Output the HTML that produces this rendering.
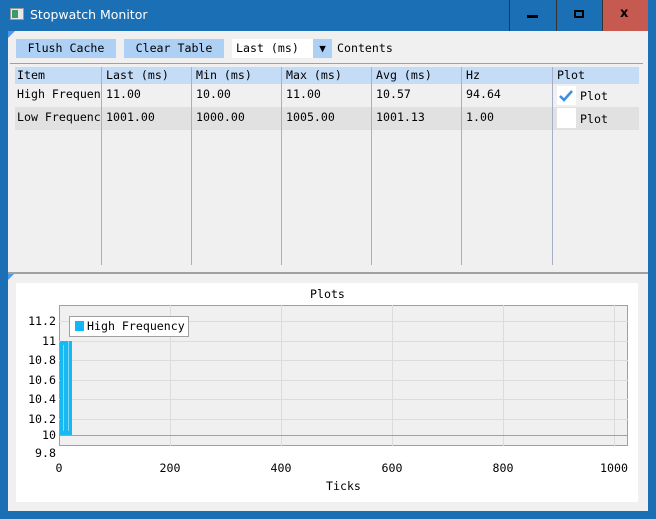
<!DOCTYPE html>
<html><head><style>
*{margin:0;padding:0;box-sizing:border-box}
body{width:656px;height:519px;background:#1a6fb5;position:relative;overflow:hidden;font-family:"DejaVu Sans Mono","Liberation Mono",monospace;font-size:11.6px;color:#000}
.a{position:absolute}
.title{left:30px;top:7px;font-family:"DejaVu Sans","Liberation Sans",sans-serif;font-size:12.5px;color:#fff}
.btn{background:#aed0f5;height:19px;line-height:19px;text-align:center}
.cell{position:absolute;white-space:nowrap;overflow:hidden}
.vl{position:absolute;width:1px;background:#a8aec8;top:67px;height:198px}
.gl{position:absolute;background:#dcdcdc}
.yl{position:absolute;right:600px;font-size:11.6px}
.xl{position:absolute;top:461px;font-size:11.6px;transform:translateX(-50%)}
</style></head><body>
<div class="a" style="left:10px;top:8px;width:14px;height:12px;background:#e8e8e8;border:1px solid #999"><div style="position:absolute;left:1px;top:1px;width:6px;height:8px;background:#3a9a6a"></div></div>
<div class="a title">Stopwatch Monitor</div>
<div class="a" style="left:509px;top:0;width:1px;height:31px;background:#333"></div>
<div class="a" style="left:556px;top:0;width:1px;height:31px;background:#333"></div>
<div class="a" style="left:602px;top:0;width:46px;height:31px;background:#c75a50;border-left:1px solid #333"></div>
<div class="a" style="left:527px;top:15px;width:11px;height:3px;background:#000"></div>
<div class="a" style="left:574px;top:10px;width:10px;height:8px;border:2px solid #000"></div>
<div class="a" style="left:620px;top:6px;font:bold 13px 'DejaVu Sans',sans-serif">x</div>
<div class="a" style="left:8px;top:31px;width:640px;height:480px;background:#f0f0f0"></div>
<div class="a" style="left:8px;top:31px;width:0;height:0;border-top:7px solid #4a9ae8;border-right:7px solid transparent"></div>
<div class="a btn" style="left:16px;top:39px;width:100px">Flush Cache</div>
<div class="a btn" style="left:124px;top:39px;width:100px">Clear Table</div>
<div class="a" style="left:232px;top:39px;width:81px;height:19px;background:#fff;line-height:19px;padding-left:4px">Last (ms)</div>
<div class="a" style="left:313px;top:39px;width:19px;height:19px;background:#aed0f5;text-align:center;line-height:19px;font-size:11px">▼</div>
<div class="a" style="left:337px;top:39px;line-height:19px">Contents</div>
<div class="a" style="left:10px;top:63px;width:633px;height:1px;background:#a0a0a0"></div>
<div class="a" style="left:15px;top:67px;width:624px;height:17px;background:#c5dcf7"></div>
<div class="a" style="left:15px;top:107px;width:624px;height:23px;background:#e1e1e1"></div>
<div class="vl" style="left:101px"></div><div class="vl" style="left:191px"></div><div class="vl" style="left:281px"></div><div class="vl" style="left:371px"></div><div class="vl" style="left:461px"></div><div class="vl" style="left:552px"></div>
<div class="cell" style="left:17px;top:68px">Item</div>
<div class="cell" style="left:106px;top:68px">Last (ms)</div>
<div class="cell" style="left:196px;top:68px">Min (ms)</div>
<div class="cell" style="left:286px;top:68px">Max (ms)</div>
<div class="cell" style="left:376px;top:68px">Avg (ms)</div>
<div class="cell" style="left:466px;top:68px">Hz</div>
<div class="cell" style="left:557px;top:68px">Plot</div>
<div class="cell" style="left:17px;top:87px;width:84px">High Frequency</div>
<div class="cell" style="left:106px;top:87px">11.00</div><div class="cell" style="left:196px;top:87px">10.00</div><div class="cell" style="left:286px;top:87px">11.00</div><div class="cell" style="left:376px;top:87px">10.57</div><div class="cell" style="left:466px;top:87px">94.64</div>
<div class="cell" style="left:17px;top:110px;width:84px">Low Frequency</div>
<div class="cell" style="left:106px;top:110px">1001.00</div><div class="cell" style="left:196px;top:110px">1000.00</div><div class="cell" style="left:286px;top:110px">1005.00</div><div class="cell" style="left:376px;top:110px">1001.13</div><div class="cell" style="left:466px;top:110px">1.00</div>
<div class="a" style="left:557px;top:86px;width:19px;height:19px;background:#fff"><svg width="19" height="19"><path d="M3 10 L7 14 L15 5" stroke="#3a8ee6" stroke-width="2.5" fill="none"/></svg></div>
<div class="a" style="left:557px;top:108px;width:19px;height:20px;background:#fff"></div>
<div class="cell" style="left:580px;top:89px">Plot</div>
<div class="cell" style="left:580px;top:112px">Plot</div>
<div class="a" style="left:8px;top:272px;width:640px;height:2px;background:#a0a0a0"></div>
<div class="a" style="left:8px;top:274px;width:0;height:0;border-top:6px solid #4a9ae8;border-right:6px solid transparent"></div>
<div class="a" style="left:16px;top:283px;width:622px;height:219px;background:#fff"></div>
<div class="a" style="left:310px;top:287px">Plots</div>
<div class="a" style="left:59px;top:305px;width:569px;height:141px;background:#f0f0f0;border:1px solid #a0a0a0"></div>
<div class="gl" style="left:170px;top:305px;width:1px;height:141px"></div>
<div class="gl" style="left:281px;top:305px;width:1px;height:141px"></div>
<div class="gl" style="left:392px;top:305px;width:1px;height:141px"></div>
<div class="gl" style="left:503px;top:305px;width:1px;height:141px"></div>
<div class="gl" style="left:614px;top:305px;width:1px;height:141px"></div>
<div class="gl" style="left:59px;top:321px;width:569px;height:1px"></div>
<div class="gl" style="left:59px;top:341px;width:569px;height:1px"></div>
<div class="gl" style="left:59px;top:360px;width:569px;height:1px"></div>
<div class="gl" style="left:59px;top:380px;width:569px;height:1px"></div>
<div class="gl" style="left:59px;top:399px;width:569px;height:1px"></div>
<div class="gl" style="left:59px;top:419px;width:569px;height:1px"></div>
<div class="a" style="left:59px;top:435px;width:569px;height:1px;background:#a0a0a0"></div>
<div class="a" style="left:60px;top:341px;width:12px;height:94px;background:#18b8f0"></div>
<div class="a" style="left:63px;top:345px;width:1px;height:86px;background:#7fd8f8"></div>
<div class="a" style="left:68px;top:341px;width:1px;height:90px;background:#7fd8f8"></div>
<div class="a" style="left:69px;top:316px;width:120px;height:21px;background:#fff;border:1px solid #a0a0a0"></div>
<div class="a" style="left:75px;top:321px;width:9px;height:10px;background:#10b8f8"></div>
<div class="a" style="left:87px;top:319px">High Frequency</div>
<div class="yl" style="top:314px">11.2</div><div class="yl" style="top:334px">11</div><div class="yl" style="top:353px">10.8</div><div class="yl" style="top:373px">10.6</div><div class="yl" style="top:392px">10.4</div><div class="yl" style="top:412px">10.2</div><div class="yl" style="top:428px">10</div><div class="yl" style="top:446px">9.8</div>
<div class="xl" style="left:59px">0</div><div class="xl" style="left:170px">200</div><div class="xl" style="left:281px">400</div><div class="xl" style="left:392px">600</div><div class="xl" style="left:503px">800</div><div class="xl" style="left:614px">1000</div>
<div class="a" style="left:326px;top:479px">Ticks</div>
</body></html>
